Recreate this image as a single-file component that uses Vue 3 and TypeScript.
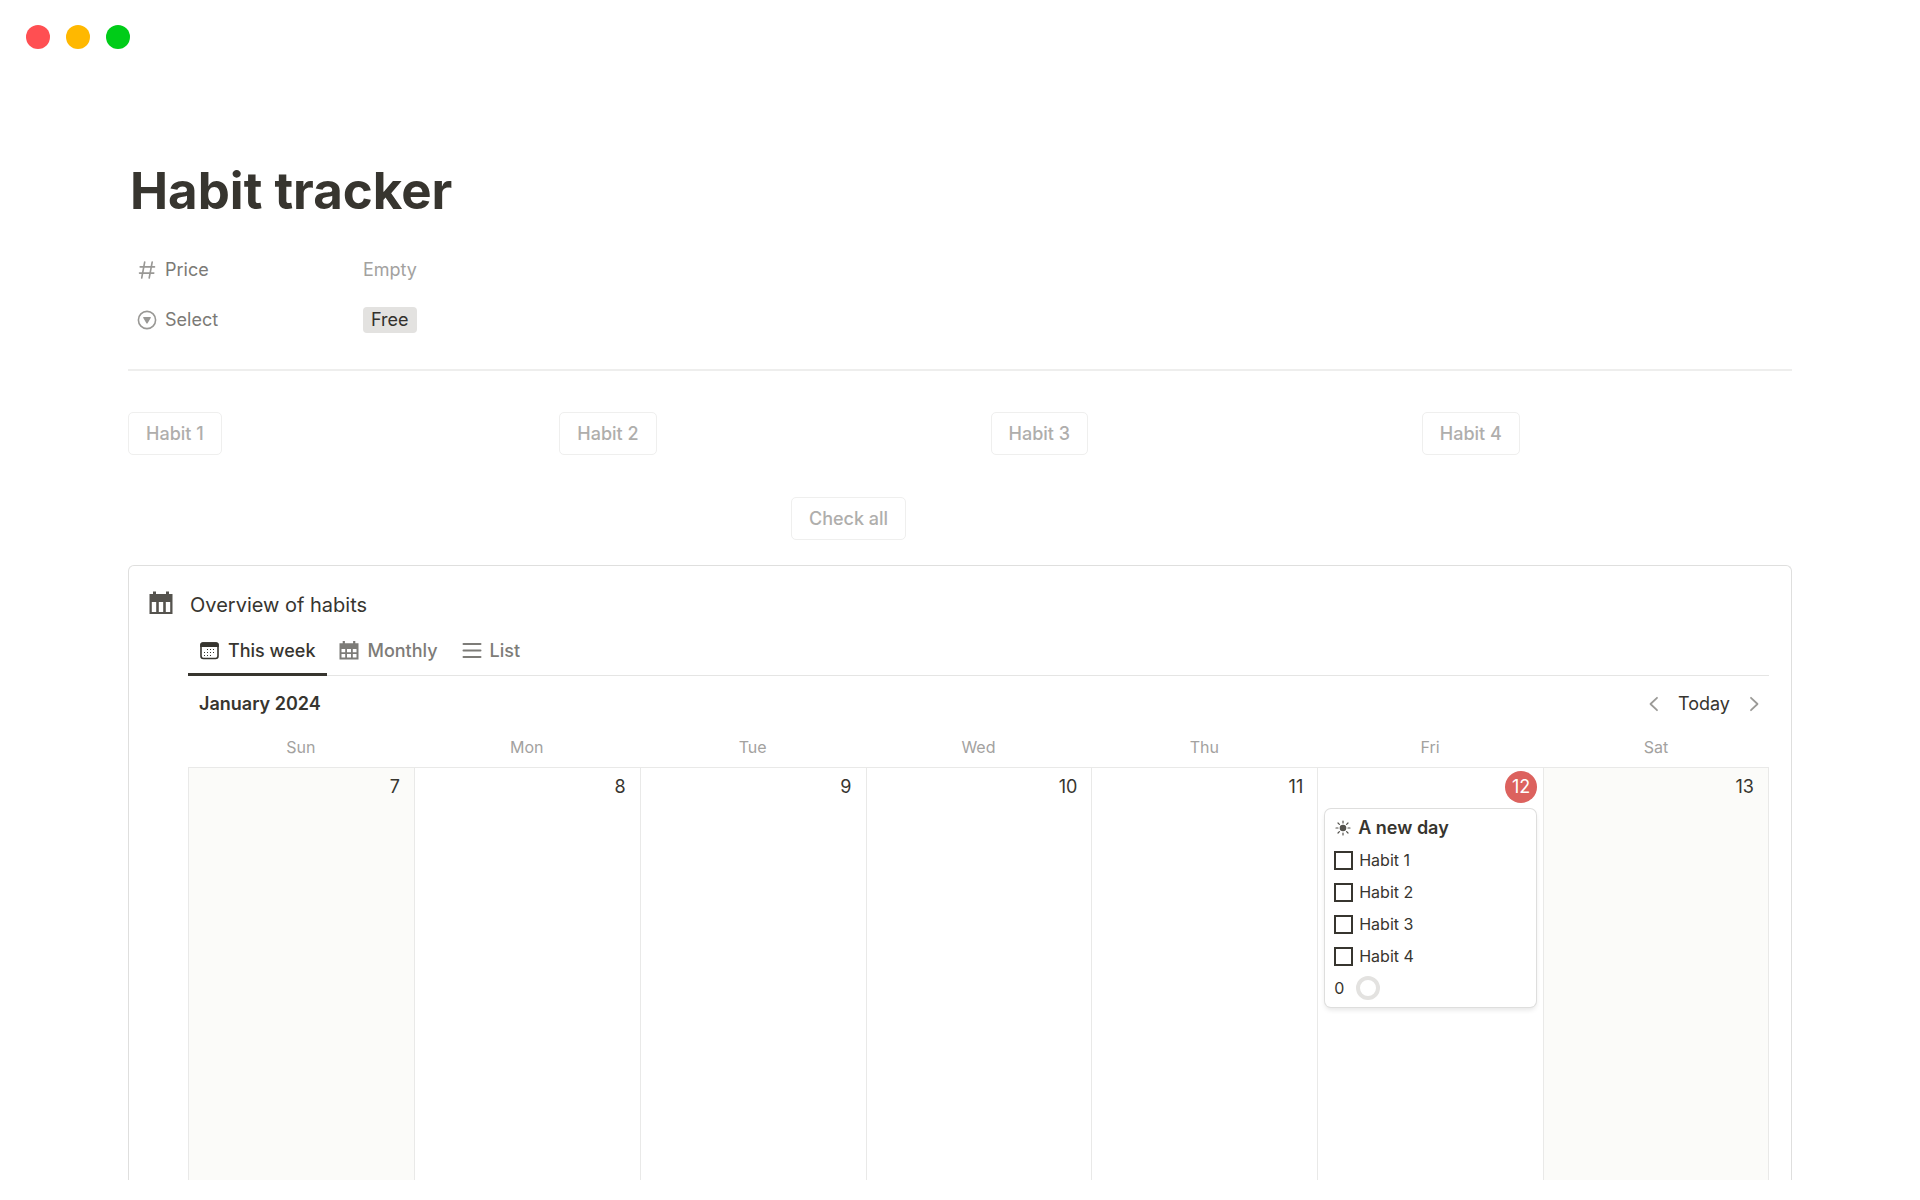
<script setup lang="ts">
import { ref } from 'vue'

interface Day {
  name: string
  date: number
  weekend?: boolean
  today?: boolean
}

const habits: string[] = ['Habit 1', 'Habit 2', 'Habit 3', 'Habit 4']

const days: Day[] = [
  { name: 'Sun', date: 7, weekend: true },
  { name: 'Mon', date: 8 },
  { name: 'Tue', date: 9 },
  { name: 'Wed', date: 10 },
  { name: 'Thu', date: 11 },
  { name: 'Fri', date: 12, today: true },
  { name: 'Sat', date: 13, weekend: true },
]

const checked = ref<boolean[]>(habits.map(() => false))

function toggle(index: number): void {
  checked.value[index] = !checked.value[index]
}

function checkAll(): void {
  checked.value = habits.map(() => true)
}
</script>

<template>
  <div class="window">
    <header class="titlebar">
      <span class="light red"></span>
      <span class="light yellow"></span>
      <span class="light green"></span>
    </header>

    <main class="page">
      <h1 class="title">Habit tracker</h1>

      <dl class="properties">
        <div class="property">
          <dt>
            <svg class="prop-icon" viewBox="0 0 20 20" fill="none" stroke="currentColor" stroke-width="1.6" stroke-linecap="round">
              <path d="M7.7 2 4.7 18M15.2 2l-3 16M3.2 6.900h14.300M2.500 13.100h14.300" />
            </svg>
            Price
          </dt>
          <dd class="empty">Empty</dd>
        </div>
        <div class="property">
          <dt>
            <svg class="prop-icon" viewBox="0 0 20 20">
              <circle cx="10" cy="10" r="8.6" fill="none" stroke="currentColor" stroke-width="1.6" />
              <path d="M6.700 7.100h6.600q1 0 .4.900l-3.100 5.300q-.6.800-1.200 0l-3.100-5.300q-.6-.9.400-.9z" fill="currentColor" />
            </svg>
            Select
          </dt>
          <dd><span class="tag">Free</span></dd>
        </div>
      </dl>

      <hr class="divider" />

      <section class="habit-row">
        <div v-for="(habit, i) in habits" :key="habit">
          <button type="button" class="action" @click="toggle(i)">{{ habit }}</button>
        </div>
      </section>
      <section class="all-row">
        <button type="button" class="action" @click="checkAll">Check all</button>
      </section>

      <section class="callout">
        <svg class="callout-icon" viewBox="0 0 24 24" fill="currentColor">
          <path fill-rule="evenodd" d="M0.5 3H4V0.5H7V3H17V0.5H20V3H23.5V23H0.5ZM2.8 11V21H7.2V11ZM9.8 11V21H14.2V11ZM16.8 11V21H21.2V11Z" />
        </svg>
        <div class="callout-body">
          <h2 class="callout-title">Overview of habits</h2>

          <nav class="tabs">
            <button type="button" class="tab active">
              <svg class="tab-icon" viewBox="0 0 20 20">
                <rect x="1" y="2" width="17" height="15.500" rx="2.400" fill="none" stroke="currentColor" stroke-width="1.600" />
                <path d="M0.200 6V3.800q0-2.600 2.600-2.600H16.200q2.600 0 2.600 2.600V6z" fill="currentColor" />
                <path d="M7 8.500h9M4 11.500h12M4 14.500h9" fill="none" stroke="currentColor" stroke-width="1" stroke-dasharray="1 2" />
              </svg>
              This week
            </button>
            <button type="button" class="tab">
              <svg class="tab-icon" viewBox="0 0 20 20" fill="currentColor">
                <path fill-rule="evenodd" d="M0.500 2.200H3.700V0H5.900V2.200H14.100V0H16.300V2.200H19.500V18.500H0.500ZM2.500 8V11.300H6.200V8ZM8 8V11.300H12V8ZM13.800 8V11.300H17.500V8ZM2.500 13.100V16.500H6.200V13.100ZM8 13.100V16.500H12V13.100ZM13.800 13.100V16.500H17.500V13.100Z" />
              </svg>
              Monthly
            </button>
            <button type="button" class="tab">
              <svg class="tab-icon" viewBox="0 0 20 20" fill="none" stroke="currentColor" stroke-width="2" stroke-linecap="round">
                <path d="M1.500 3h17M1.500 9.500h17M1.500 16h17" />
              </svg>
              List
            </button>
          </nav>

          <div class="toolbar">
            <h3 class="month">January 2024</h3>
            <div class="pager">
              <button type="button" class="arrow" aria-label="Previous week">
                <svg viewBox="0 0 10 16" fill="none" stroke="currentColor" stroke-width="1.800" stroke-linecap="round" stroke-linejoin="round"><path d="M8 1.800 1.500 8l6.500 6.200" /></svg>
              </button>
              <button type="button" class="today-button">Today</button>
              <button type="button" class="arrow" aria-label="Next week">
                <svg viewBox="0 0 10 16" fill="none" stroke="currentColor" stroke-width="1.800" stroke-linecap="round" stroke-linejoin="round"><path d="M2 1.800 8.500 8l-6.500 6.200" /></svg>
              </button>
            </div>
          </div>

          <table class="calendar">
            <thead>
              <tr>
                <th v-for="day in days" :key="day.name" scope="col">{{ day.name }}</th>
              </tr>
            </thead>
            <tbody>
              <tr>
                <td v-for="day in days" :key="day.date" :class="{ weekend: day.weekend }">
                  <div class="date-line">
                    <span :class="day.today ? 'date current' : 'date'">{{ day.date }}</span>
                  </div>
                  <article v-if="day.today" class="card">
                    <h4 class="card-title">
                      <svg class="sun" viewBox="0 0 18 18">
                        <circle cx="9" cy="9" r="3.300" fill="currentColor" />
                        <path d="M9 2v2M9 14v2M2 9h2M14 9h2M4 4l1.400 1.400M12.600 12.600 14 14M4 14l1.400-1.400M12.600 5.400 14 4" fill="none" stroke="currentColor" stroke-width="1.200" stroke-linecap="round" />
                      </svg>
                      A new day
                    </h4>
                    <label v-for="(habit, i) in habits" :key="habit" class="check">
                      <input v-model="checked[i]" type="checkbox" />
                      {{ habit }}
                    </label>
                    <div class="progress">
                      {{ checked.filter(Boolean).length }}
                      <span class="ring"></span>
                    </div>
                  </article>
                </td>
              </tr>
            </tbody>
          </table>
        </div>
      </section>
    </main>
  </div>
</template>

<style>
body {
  background: #fff;
}
</style>

<style scoped>
.window {
  font-family: Inter, "Liberation Sans", sans-serif;
  font-size: 18px;
  line-height: 24px;
  color: #37352f;
}

.window * {
  box-sizing: border-box;
}

button {
  font: inherit;
  color: inherit;
  background: none;
  border: 0;
  padding: 0;
  cursor: pointer;
}

.titlebar {
  display: flex;
  gap: 16px;
  padding: 25px 26px 0;
}

.light {
  width: 24px;
  height: 24px;
  border-radius: 50%;
}

.red { background: #ff4f52; }
.yellow { background: #ffb800; }
.green { background: #00cc18; }

.page {
  padding: 110px 128px 0;
}

.title {
  margin: 0;
  padding-left: 2px;
  font-size: 51px;
  line-height: 64px;
  font-weight: 700;
}

.properties {
  margin: 0;
  padding: 22px 0 0 9px;
}

.property {
  display: flex;
  align-items: center;
  height: 50px;
}

.property dt {
  display: flex;
  align-items: center;
  gap: 8px;
  width: 226px;
  color: #7b7a76;
}

.prop-icon {
  width: 20px;
  height: 20px;
  color: #999895;
}

.property dd {
  margin: 0;
}

.property .empty {
  color: #a3a29f;
}

.tag {
  display: block;
  padding: 1px 8px;
  border-radius: 4px;
  background: #e3e2e0;
  color: #32302c;
}

.divider {
  height: 2px;
  margin: 24px 0 41px;
  border: 0;
  background: #eeeeed;
}

.habit-row {
  display: grid;
  grid-template-columns: repeat(4, 1fr);
  gap: 61px;
}

.all-row {
  display: grid;
  grid-template-columns: 602px auto;
  justify-content: start;
  gap: 61px;
  padding: 42px 0 25px;
}

.all-row .action {
  grid-column: 2;
}

.action {
  display: block;
  height: 43px;
  padding: 0 17px;
  border: 1px solid #efefee;
  border-radius: 5px;
  font-weight: 500;
  color: #afaeac;
}

.callout {
  display: flex;
  gap: 15px;
  padding: 25px 22px 0 20px;
  border: 1px solid #dfdfde;
  border-bottom: 0;
  border-radius: 6px 6px 0 0;
}

.callout-icon {
  flex: none;
  width: 24px;
  height: 24px;
  color: #55534e;
}

.callout-body {
  flex: 1;
  min-width: 0;
}

.callout-title {
  margin: 0;
  padding-left: 2px;
  font-size: 20px;
  line-height: 28px;
  font-weight: 400;
}

.tabs {
  display: flex;
  border-bottom: 1px solid #e5e5e4;
}

.tab {
  display: flex;
  align-items: center;
  gap: 8px;
  height: 57px;
  padding: 9px 12px 0;
  border-bottom: 3px solid transparent;
  margin-bottom: -1px;
  font-weight: 500;
  color: #7d7c78;
}

.tab.active {
  border-color: #37352f;
  color: #37352f;
}

.tab-icon {
  width: 20px;
  height: 20px;
}

.toolbar {
  display: flex;
  align-items: center;
  justify-content: space-between;
  height: 56px;
  padding: 0 10px 0 11px;
}

.month {
  margin: 0;
  font-size: 18px;
  font-weight: 600;
}

.pager {
  display: flex;
  align-items: center;
  gap: 19px;
}

.arrow {
  display: flex;
  color: #9b9a97;
}

.arrow svg {
  width: 10px;
  height: 16px;
}

.calendar {
  width: 100%;
  table-layout: fixed;
  border-collapse: separate;
  border-spacing: 0;
}

.calendar th {
  height: 35px;
  padding: 0 0 6px;
  font-size: 16px;
  font-weight: 400;
  color: #a3a29f;
}

.calendar td {
  height: 413px;
  padding: 3px 6px 0;
  vertical-align: top;
  border: 1px solid #e9e9e8;
  border-width: 1px 0 0 1px;
}

.calendar td:last-child {
  border-right-width: 1px;
}

.weekend {
  background: #fbfbf9;
}

.date-line {
  display: flex;
  justify-content: flex-end;
}

.date {
  padding: 0 8px;
  line-height: 32px;
}

.date.current {
  width: 32px;
  padding: 0;
  border-radius: 50%;
  background: #dc625e;
  color: #fff;
  text-align: center;
}

.card {
  margin: 6px 1px 0;
  padding: 3px 9px;
  border-radius: 6px;
  background: #fff;
  box-shadow: 0 0 0 1px #dededd, 0 3px 5px #0000001a;
  font-size: 16px;
}

.card-title {
  display: flex;
  align-items: center;
  gap: 6px;
  height: 32px;
  margin: 0;
  font-size: 18px;
  font-weight: 600;
}

.sun {
  width: 18px;
  height: 18px;
  color: #55534e;
}

.check {
  display: flex;
  align-items: center;
  gap: 6px;
  height: 32px;
}

.check input {
  appearance: none;
  width: 19px;
  height: 19px;
  margin: 0;
  border: 2px solid #37352f;
}

.check input:checked {
  background: #37352f;
}

.progress {
  display: flex;
  align-items: center;
  gap: 12px;
  height: 32px;
}

.ring {
  width: 24px;
  height: 24px;
  border: 4px solid #e3e2e0;
  border-radius: 50%;
}
</style>
